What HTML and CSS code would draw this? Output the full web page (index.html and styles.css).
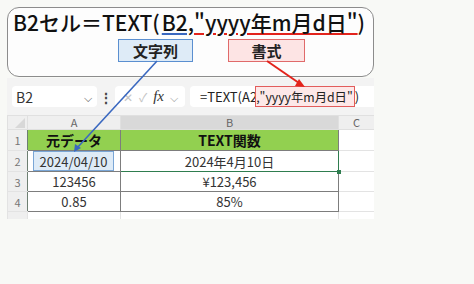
FILE: index.html
```html
<!DOCTYPE html>
<html lang="ja">
<head>
  <meta charset="UTF-8" />
  <title>TEXT関数</title>
  <link rel="stylesheet" href="styles.css">
</head>
<body>
  <div class="page">
    <!-- callout -->
    <div class="callout">
      <div class="title">B2セル＝TEXT(<span class="u-blue">B2,</span><span class="u-red">"yyyy年m月d日"</span>)</div>
      <div class="tags">
        <span class="tag tag-blue">文字列</span>
        <span class="tag tag-red">書式</span>
      </div>
    </div>

    <!-- sheet -->
    <div class="sheet">
      <div class="fbar">
        <div class="namebox"><span>B2</span><span class="chev">⌵</span></div>
        <div class="dots">⋮</div>
        <div class="fxbox">
          <span class="ic">✕</span><span class="ic">✓</span><span class="fx">fx</span><span class="chev small">⌵</span>
        </div>
        <div class="formula">=TEXT(A2<span class="fmt">,"yyyy年m月d日"</span>)</div>
      </div>
      <table class="grid">
        <colgroup>
          <col style="width:20px"><col style="width:93px"><col style="width:218px"><col style="width:36px">
        </colgroup>
        <tr class="head">
          <th class="corner"><span class="tri"></span></th>
          <th>A</th>
          <th class="sel">B</th>
          <th>C</th>
        </tr>
        <tr class="r1">
          <th class="rh">1</th>
          <td class="t hd">元データ</td>
          <td class="t hd">TEXT関数</td>
          <td></td>
        </tr>
        <tr class="r2">
          <th class="rh">2</th>
          <td class="t a2"><span class="mark">2024/04/10</span></td>
          <td class="t active">2024年4月10日</td>
          <td></td>
        </tr>
        <tr class="r3">
          <th class="rh">3</th>
          <td class="t">123456</td>
          <td class="t">¥123,456</td>
          <td></td>
        </tr>
        <tr class="r4">
          <th class="rh">4</th>
          <td class="t">0.85</td>
          <td class="t">85%</td>
          <td></td>
        </tr>
        <tr class="r5">
          <th class="rh plain">5</th>
          <td></td>
          <td></td>
          <td></td>
        </tr>
      </table>
    </div>

    <!-- arrows -->
    <svg class="arrows" width="474" height="284" viewBox="0 0 474 284">
      <line x1="157" y1="61" x2="77" y2="148" stroke="#3a68c0" stroke-width="1.6"/>
      <polygon points="74,152 75,144 81,148" fill="#3a68c0"/>
      <line x1="267" y1="61" x2="299" y2="83" stroke="#e3231c" stroke-width="2"/>
      <polygon points="305,87 295,86 299,79" fill="#e3231c"/>
    </svg>
  </div>
</body>
</html>
```

FILE: styles.css
```css
body {
  margin: 0;
  background: #f8f9f6;
  font-family: "Noto Sans CJK JP", "Noto Sans", sans-serif;
  color: #222;
}
.page {
  position: relative;
  width: 474px;
  height: 284px;
  overflow: hidden;
  padding: 7px 0 0 7px;
  box-sizing: border-box;
}
.callout {
  width: 367px;
  height: 70px;
  box-sizing: border-box;
  border: 1px solid #8c8c8c;
  border-radius: 12px;
  background: #fdfdfd;
  padding: 1px 0 0 5px;
}
.title {
  font-size: 21px;
  font-weight: 500;
  line-height: 27px;
  color: #111;
  white-space: nowrap;
}
.u-blue {
  text-decoration: underline 2px #3a68c0;
  text-underline-offset: 2px;
  margin-left: 2px;
}
.u-red {
  text-decoration: underline 2px #e3231c;
  text-underline-offset: 2px;
}
.tags {
  display: flex;
  gap: 35px;
  margin: 3px 0 0 105px;
}
.tag {
  height: 23px;
  box-sizing: border-box;
  font-size: 15px;
  font-weight: 700;
  line-height: 21px;
  text-align: center;
  color: #222;
}
.tag-blue {
  width: 75px;
  background: #deebf7;
  border: 1px solid #5b8fd0;
}
.tag-red {
  width: 77px;
  background: #fde4e4;
  border: 1px solid #e06a6a;
}

.sheet {
  width: 367px;
  height: 141px;
  margin-top: 1px;
  background: #f3f3f3;
  overflow: hidden;
}
.fbar {
  display: flex;
  align-items: center;
  height: 37px;
  padding: 0 0 0 5px;
  box-sizing: border-box;
}
.namebox, .fxbox, .formula {
  height: 21px;
  background: #fff;
  border-radius: 4px;
  display: flex;
  align-items: center;
}
.namebox {
  width: 85px;
  justify-content: space-between;
  padding: 0 5px 0 4px;
  box-sizing: border-box;
  font-size: 14px;
  color: #333;
}
.chev {
  font-size: 11px;
  color: #555;
}
.chev.small {
  color: #999;
}
.dots {
  width: 18px;
  text-align: center;
  font-size: 14px;
  font-weight: 700;
  color: #444;
}
.fxbox {
  width: 70px;
  padding: 0 4px 0 8px;
  box-sizing: border-box;
  gap: 6px;
}
.ic {
  font-size: 12px;
  color: #c4c4c4;
}
.fx {
  font-family: "Liberation Serif", serif;
  font-style: italic;
  font-size: 15px;
  color: #333;
}
.formula {
  flex: 1;
  margin-left: 5px;
  padding-left: 10px;
  font-size: 13px;
  color: #222;
  border-radius: 4px 0 0 4px;
  white-space: nowrap;
}
.fmt {
  height: 21px;
  line-height: 20px;
  box-sizing: border-box;
  background: #fde8e8;
  border: 1px solid #e25c5c;
  padding: 0 1px 0 0;
  font-size: 12.3px;
  margin-left: -2px;
  margin-top: -1px;
}

.grid {
  border-collapse: collapse;
  table-layout: fixed;
  width: 367px;
  margin-top: 0;
  background: #fff;
}
.grid th, .grid td {
  padding: 0;
  border: 1px solid #e3e3e3;
  text-align: center;
  font-weight: 400;
  white-space: nowrap;
  overflow: hidden;
}
.head th {
  height: 13px;
  font-size: 11px;
  line-height: 13px;
  color: #666;
  background: #efefef;
  border-color: #e0e0e0;
}
.head th.sel {
  background: #d9d9d9;
}
.corner {
  position: relative;
}
.tri {
  position: absolute;
  right: 2px;
  bottom: 1px;
  width: 0;
  height: 0;
  border-left: 10px solid transparent;
  border-bottom: 10px solid #d8d8d8;
}
.rh {
  font-size: 11px;
  color: #777;
  background: #efefef;
  border-right-color: #6e7f72 !important;
}
.rh.plain {
  border-right-color: #e3e3e3 !important;
}
.r1 td, .r2 td { height: 20px; }
.r3 td, .r4 td { height: 19px; }
.r5 td { height: 19px; }
.grid td {
  font-size: 13px;
  color: #333;
}
.grid td.t {
  border-color: #7d7d7d;
}
.grid td.hd {
  background: #92d050;
  font-size: 14px;
  font-weight: 700;
  color: #111;
}
.a2 {
  padding: 0 6px 0 5px !important;
}
.mark {
  display: block;
  height: 20px;
  line-height: 19px;
  box-sizing: border-box;
  background: #deebf7;
  border: 1px solid #7aa6d6;
}
.grid td.active {
  position: relative;
  border-color: #2f7d4f;
  overflow: visible;
}
.grid td.active::after {
  content: "";
  position: absolute;
  right: -3px;
  bottom: -3px;
  width: 4px;
  height: 4px;
  background: #2f7d4f;
}
.arrows {
  position: absolute;
  left: 0;
  top: 0;
  pointer-events: none;
}
```
